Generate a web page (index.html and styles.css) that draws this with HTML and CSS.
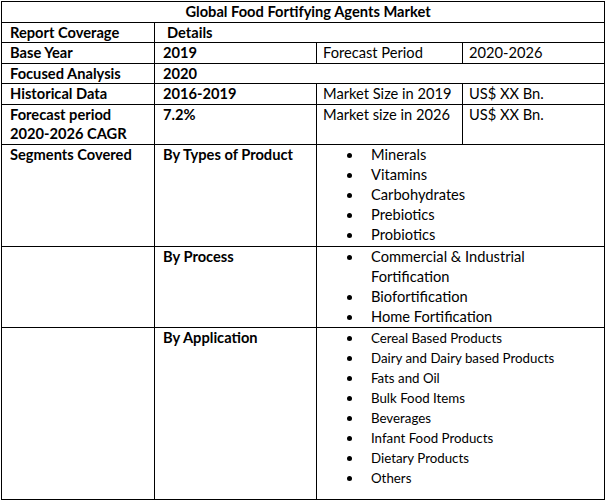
FILE: index.html
```html
<!DOCTYPE html>
<html lang="en">
<head>
<meta charset="utf-8">
<title>Global Food Fortifying Agents Market</title>
<link rel="stylesheet" href="styles.css">
</head>
<body>
<table class="report">
  <colgroup>
    <col class="c1"><col class="c2"><col class="c3"><col class="c4">
  </colgroup>
  <tr class="title-row"><td colspan="4" class="title">Global Food Fortifying Agents Market</td></tr>
  <tr><td class="b">Report Coverage</td><td class="b details" colspan="3">Details</td></tr>
  <tr><td class="b">Base Year</td><td class="b">2019</td><td>Forecast Period</td><td>2020-2026</td></tr>
  <tr><td class="b">Focused Analysis</td><td class="b" colspan="3">2020</td></tr>
  <tr><td class="b">Historical Data</td><td class="b">2016-2019</td><td>Market Size in 2019</td><td>US$ XX Bn.</td></tr>
  <tr class="tall"><td class="b">Forecast period 2020-2026 CAGR</td><td class="b">7.2%</td><td>Market size in 2026</td><td>US$ XX Bn.</td></tr>
  <tr>
    <td class="b">Segments Covered</td>
    <td class="b">By Types of Product</td>
    <td colspan="2" class="listcell">
      <ul class="bullets wide">
        <li>Minerals</li><li>Vitamins</li><li>Carbohydrates</li><li>Prebiotics</li><li>Probiotics</li>
      </ul>
    </td>
  </tr>
  <tr>
    <td></td>
    <td class="b">By Process</td>
    <td colspan="2" class="listcell">
      <ul class="bullets">
        <li>Commercial &amp; Industrial<br>Fortification</li><li>Biofortification</li><li>Home Fortification</li>
      </ul>
    </td>
  </tr>
  <tr>
    <td></td>
    <td class="b">By Application</td>
    <td colspan="2" class="listcell">
      <ul class="bullets small">
        <li>Cereal Based Products</li><li>Dairy and Dairy based Products</li><li>Fats and Oil</li><li>Bulk Food Items</li><li>Beverages</li><li>Infant Food Products</li><li>Dietary Products</li><li>Others</li>
      </ul>
    </td>
  </tr>
</table>
</body>
</html>
```
FILE: styles.css
```css
html, body {
  margin: 0;
  padding: 0;
  background: #fff;
}
body {
  padding: 1px 0 0 1px;
  font-family: Lato, "Liberation Sans", sans-serif;
  font-size: 14.67px;
  color: #000;
}
.report {
  border-collapse: collapse;
  table-layout: fixed;
  width: 603px;
}
.c1 { width: 153px; }
.c2 { width: 162px; }
.c3 { width: 146px; }
.c4 { width: 142px; }
.report td {
  border: 1px solid #000;
  padding: 0 4px 0 8px;
  line-height: 19.5px;
  vertical-align: top;
  white-space: nowrap;
}
.report td:nth-child(n+3) { padding-left: 6px; }
.report td.b { font-weight: 700; }
.report td.title {
  font-weight: 700;
  text-align: center;
  padding-left: 14px;
}
.report td.details { padding-left: 12px; }
.report td:first-child.b { white-space: normal; }
.report td.listcell { padding: 0; }
.bullets {
  list-style: none;
  margin: 0;
  padding: 0 0 0 54px;
}
.bullets li {
  position: relative;
  line-height: 20px;
}
.bullets li::before {
  content: "";
  position: absolute;
  left: -24px;
  top: 8px;
  width: 5px;
  height: 5px;
  border-radius: 50%;
  background: #000;
}
.bullets.wide li { line-height: 20.2px; }
.bullets.small {
  font-size: 13.3px;
  padding-bottom: 11px;
}
.bullets.small li { line-height: 20px; }
```
